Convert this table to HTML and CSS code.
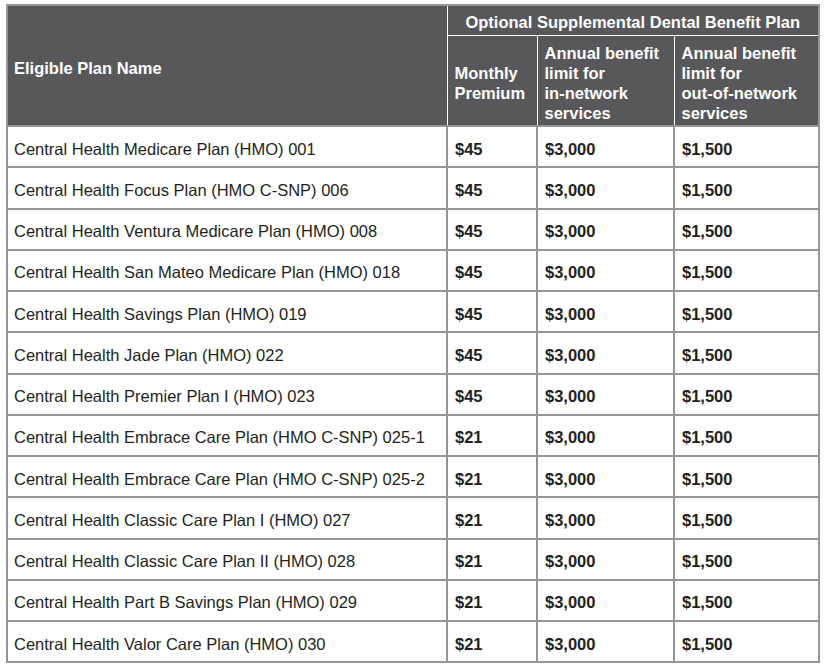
FILE: index.html
```html
<!DOCTYPE html>
<html>
<head>
<meta charset="utf-8">
<link rel="stylesheet" href="styles.css">
</head>
<body>
<table class="plans">
  <colgroup>
    <col class="c-name">
    <col class="c-prem">
    <col class="c-in">
    <col class="c-out">
  </colgroup>
  <thead>
    <tr class="h1">
      <th class="name-h" rowspan="2">Eligible Plan Name</th>
      <th class="group-h" colspan="3">Optional Supplemental Dental Benefit Plan</th>
    </tr>
    <tr class="h2">
      <th class="sub-h">Monthly<br>Premium</th>
      <th class="sub-h">Annual benefit<br>limit for<br>in-network<br>services</th>
      <th class="sub-h">Annual benefit<br>limit for<br>out-of-network<br>services</th>
    </tr>
  </thead>
  <tbody>
    <tr><td>Central Health Medicare Plan (HMO) 001</td><td class="amt">$45</td><td class="amt">$3,000</td><td class="amt">$1,500</td></tr>
    <tr><td>Central Health Focus Plan (HMO C-SNP) 006</td><td class="amt">$45</td><td class="amt">$3,000</td><td class="amt">$1,500</td></tr>
    <tr><td>Central Health Ventura Medicare Plan (HMO) 008</td><td class="amt">$45</td><td class="amt">$3,000</td><td class="amt">$1,500</td></tr>
    <tr><td>Central Health San Mateo Medicare Plan (HMO) 018</td><td class="amt">$45</td><td class="amt">$3,000</td><td class="amt">$1,500</td></tr>
    <tr><td>Central Health Savings Plan (HMO) 019</td><td class="amt">$45</td><td class="amt">$3,000</td><td class="amt">$1,500</td></tr>
    <tr><td>Central Health Jade Plan (HMO) 022</td><td class="amt">$45</td><td class="amt">$3,000</td><td class="amt">$1,500</td></tr>
    <tr><td>Central Health Premier Plan I (HMO) 023</td><td class="amt">$45</td><td class="amt">$3,000</td><td class="amt">$1,500</td></tr>
    <tr><td>Central Health Embrace Care Plan (HMO C-SNP) 025-1</td><td class="amt">$21</td><td class="amt">$3,000</td><td class="amt">$1,500</td></tr>
    <tr><td>Central Health Embrace Care Plan (HMO C-SNP) 025-2</td><td class="amt">$21</td><td class="amt">$3,000</td><td class="amt">$1,500</td></tr>
    <tr><td>Central Health Classic Care Plan I (HMO) 027</td><td class="amt">$21</td><td class="amt">$3,000</td><td class="amt">$1,500</td></tr>
    <tr><td>Central Health Classic Care Plan II (HMO) 028</td><td class="amt">$21</td><td class="amt">$3,000</td><td class="amt">$1,500</td></tr>
    <tr><td>Central Health Part B Savings Plan (HMO) 029</td><td class="amt">$21</td><td class="amt">$3,000</td><td class="amt">$1,500</td></tr>
    <tr><td>Central Health Valor Care Plan (HMO) 030</td><td class="amt">$21</td><td class="amt">$3,000</td><td class="amt">$1,500</td></tr>
  </tbody>
</table>
</body>
</html>
```

FILE: styles.css
```css
html, body {
  margin: 0;
  padding: 0;
  background: #ffffff;
}

body {
  font-family: "Liberation Sans", Arial, sans-serif;
  color: #231f20;
}

.plans {
  margin: 4px 0 0 6px;
  width: 814px;
  table-layout: fixed;
  border-collapse: collapse;
  border: 2px solid #939598;
  font-size: 16.5px;
}

.c-name { width: 440px; }
.c-prem { width: 90px; }
.c-in { width: 137px; }
.c-out { width: 145px; }

.plans th {
  background: #58585a;
  color: #ffffff;
  font-weight: bold;
  text-align: left;
  border: 1px solid #ffffff;
  line-height: 20px;
  padding: 0 6px;
}

.plans .name-h {
  vertical-align: middle;
  padding-top: 5px;
  border-left: 2px solid #939598;
  border-top: 2px solid #939598;
}

.plans .group-h {
  text-align: center;
  height: 27px;
  padding-top: 2px;
  vertical-align: middle;
  border-top: 2px solid #939598;
  border-right: 2px solid #939598;
}

.plans .sub-h {
  vertical-align: middle;
  height: 84px;
  padding-top: 5px;
  padding-bottom: 0;
  padding-left: 7px;
}

.plans .h2 .sub-h:last-child {
  border-right: 2px solid #939598;
}

.plans td {
  border: 2px solid #939598;
  height: 35.25px;
  padding: 4px 6px 0;
  vertical-align: middle;
  line-height: 20px;
  white-space: nowrap;
}

.plans td.amt {
  font-weight: bold;
  padding-left: 7px;
}
```
